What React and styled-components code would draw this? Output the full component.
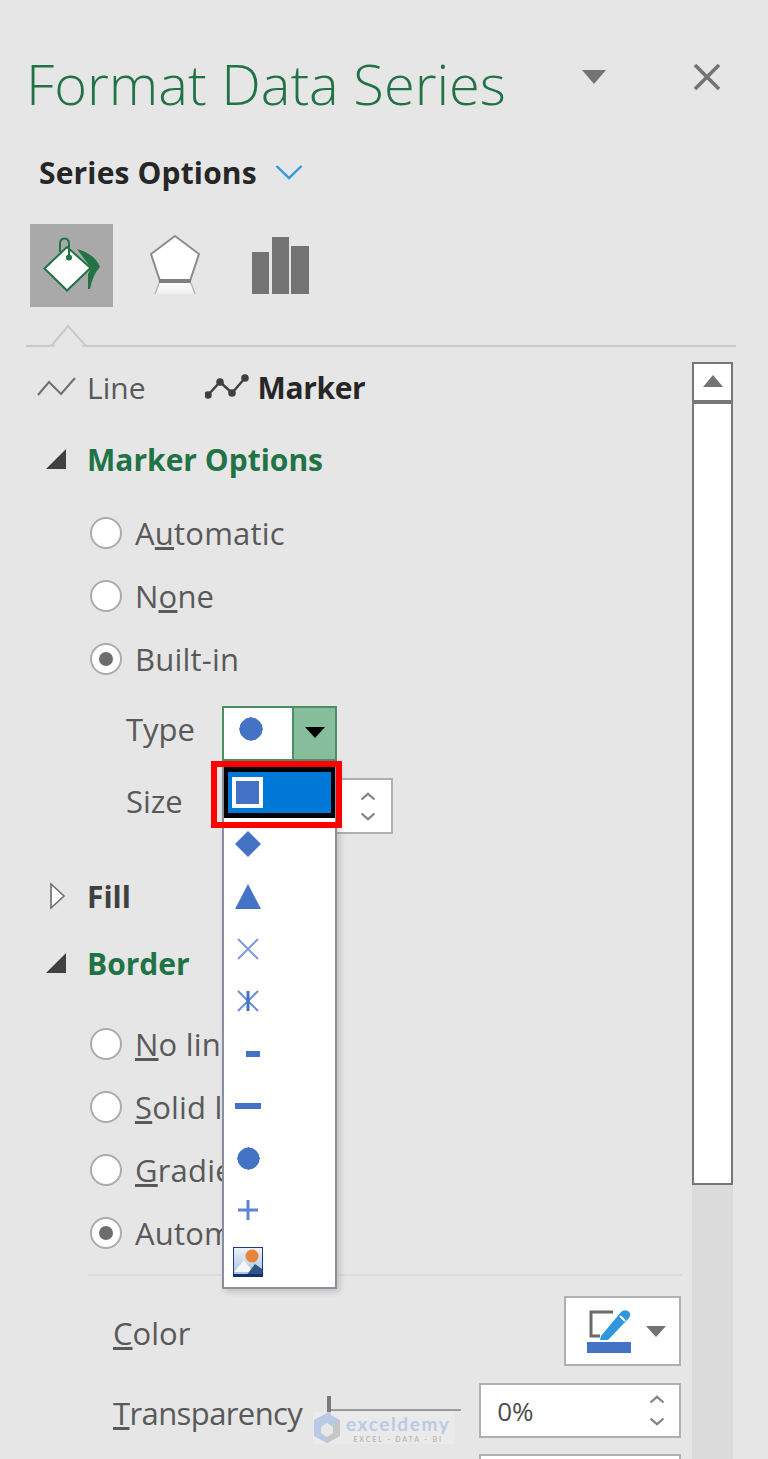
import React from "react";
import styled, { createGlobalStyle } from "styled-components";

const Global = createGlobalStyle`
  html, body { margin: 0; padding: 0; background: #e6e6e6; }
  body { font-family: "Open Sans", "Noto Sans", sans-serif; }
`;
const Page = styled.div`
  position: relative; width: 768px; height: 1459px; overflow: hidden; background: #e6e6e6;
`;
const Header = styled.header`
  display: flex; align-items: center; height: 60px; margin-top: 53px; padding-left: 26px;
`;
const Title = styled.h1`
  margin: 0; flex: 1; font-size: 56px; font-weight: 300; color: #217346; line-height: 60px; letter-spacing: 0; white-space: nowrap;
`;
const HeaderIcons = styled.div`
  display: flex; align-items: center; gap: 87px; margin-right: 47px; margin-top: -12px;
`;
const SeriesRow = styled.div`
  display: flex; align-items: center; gap: 18px; height: 40px; margin-top: 39px; padding-left: 39px;
  font-size: 30px; font-weight: 700; color: #262626; letter-spacing: 0.15px;
`;
const Tabs = styled.div`
  display: flex; align-items: center; height: 83px; margin-top: 32px; padding-left: 30px;
`;
const TabBtn = styled.div`
  width: 83px; height: 83px; display: flex; align-items: center; justify-content: center;
  margin-right: ${p => p.$gap || 0}px; background: ${p => (p.$active ? "#a9a9a9" : "transparent")};
`;
const Rule = styled.div`
  position: relative; height: 2px; margin: 38px 32px 0 26px; background: #c9c9c9;
`;
const Notch = styled.svg`
  position: absolute; left: 24px; top: -22px;
`;
const Body = styled.div`
  display: flex; height: 1120px;
`;
const Content = styled.div`
  width: 692px; flex: none; padding-top: 20px;
`;
const ModeRow = styled.div`
  display: flex; align-items: center; height: 40px; padding-left: 37px;
`;
const Mode = styled.div`
  display: flex; align-items: center; gap: ${p => p.$gap}px; margin-right: ${p => p.$mr || 0}px;
  font-size: 30px; letter-spacing: ${p => (p.$bold ? -0.35 : 0)}px;
  font-weight: ${p => (p.$bold ? 700 : 400)}; color: ${p => (p.$bold ? "#262626" : "#595959")};
`;
const Section = styled.div`
  display: flex; align-items: center; height: 40px; margin-top: ${p => p.$mt}px;
  font-size: 30px; font-weight: 700; letter-spacing: 0; color: ${p => (p.$open ? "#217346" : "#404040")};
`;
const Arrow = styled.svg`
  width: 20px; height: ${p => p.$h || 20}px; margin-left: 46px; margin-right: 21px; flex: none;
`;
const RadioRow = styled.label`
  display: flex; align-items: center; gap: 13px; height: 32px; margin-top: ${p => p.$mt}px; padding-left: 90px;
  font-size: 31px; color: #595959; letter-spacing: 0.2px; white-space: nowrap;
`;
const Radio = styled.span`
  width: 32px; height: 32px; box-sizing: border-box; border-radius: 50%; flex: none;
  border: 2px solid #ababab; background: #fff; display: flex; align-items: center; justify-content: center;
  &::after { content: ""; display: ${p => (p.$on ? "block" : "none")}; width: 14px; height: 14px; border-radius: 50%; background: #6d6d6d; }
`;
const FieldRow = styled.div`
  display: flex; align-items: center; margin-top: ${p => p.$mt}px; padding-left: 126px;
  font-size: 31px; color: #595959; letter-spacing: 0;
`;
const FieldLabel = styled.span`
  width: 96px; flex: none; margin-bottom: 10px;
`;
const TypeBox = styled.div`
  display: flex; width: 115px; height: 55px; box-sizing: border-box; border: 2px solid #4c8f67; background: #fff;
`;
const TypeValue = styled.div`
  flex: 1; display: flex; padding: 9px 0 0 15px;
`;
const TypeCaret = styled.div`
  width: 43px; display: flex; align-items: center; justify-content: center; padding-bottom: 2px; box-sizing: border-box; background: #86bd9b; border-left: 2px solid #4c8f67;
`;
const SizeBox = styled.div`
  display: flex; justify-content: flex-end; width: 171px; height: 56px; box-sizing: border-box;
  border: 2px solid #b0b0b0; background: #fff;
`;
const Spin = styled.div`
  width: 46px; display: flex; flex-direction: column; justify-content: space-around; align-items: center; padding: 6px 0; box-sizing: border-box;
`;
const Divider = styled.div`
  height: 2px; margin: 25px 10px 0 88px; background: #dcdcdc;
`;
const SettingRow = styled.div`
  display: flex; align-items: center; justify-content: space-between; height: ${p => p.$h}px;
  margin: ${p => p.$mt}px 11px 0 113px; font-size: 31px; color: #595959; letter-spacing: 0;
`;
const SettingLabel = styled.span`
  margin-top: 4px; letter-spacing: ${p => p.$ls || 0}px; white-space: nowrap;
`;
const ColorBtn = styled.div`
  display: flex; align-items: center; gap: 15px; width: 117px; height: 70px; padding-left: 21px; box-sizing: border-box;
  border: 2px solid #b0b0b0; background: #fff;
`;
const SliderWrap = styled.div`
  position: relative; display: flex; align-items: center; flex: none; width: 134px; height: 40px; margin-left: 25px; margin-right: 18px;
`;
const SliderLine = styled.div`
  width: 100%; height: 2px; background: #9a9a9a; margin-top: -2px;
`;
const SliderThumb = styled.div`
  position: absolute; left: 0; top: 5px; width: 4px; height: 28px; background: #7a7a7a;
`;
const PctBox = styled.div`
  display: flex; align-items: center; justify-content: space-between; width: 202px; height: 55px; box-sizing: border-box;
  padding: 0 14px 0 16px; border: 2px solid #b0b0b0; background: #fff; font-size: 26px; color: #4d4d4d; letter-spacing: 0;
`;
const SpinCol = styled.div`
  display: flex; flex-direction: column; gap: 13px; align-items: center;
`;
const LeftGroup = styled.div`
  display: flex; align-items: center;
`;
const NextBox = styled.div`
  width: 202px; height: 30px; box-sizing: border-box; margin: 16px 11px 0 auto; border: 2px solid #b0b0b0; border-bottom: 0; background: #fff;
`;
const Scrollbar = styled.div`
  width: 41px; flex: none; margin-top: 15px; display: flex; flex-direction: column;
  background: #dbdbdb;
`;
const ScrollUp = styled.div`
  height: 38px; box-sizing: border-box; background: #fff; border: 2px solid #777; border-bottom: 0;
  display: flex; justify-content: center; padding-top: 11px;
`;
const ScrollThumb = styled.div`
  height: 785px; box-sizing: border-box; background: #fff; border: 2px solid #777; border-top-width: 4px;
`;
const Menu = styled.div`
  position: absolute; left: 222px; top: 762px; width: 115px; height: 527px; box-sizing: border-box;
  background: #fff; border: 2px solid #8a8f99; border-top: 0; box-shadow: 3px 3px 6px rgba(0,0,0,.16);
`;
const MenuSelected = styled.div`
  position: absolute; left: 0; top: 5px; width: 111px; height: 51px; box-sizing: border-box;
  background: #0078d7; border: 4px solid #000; border-width: 5px 4px; display: flex; align-items: center; padding-left: 4px;
`;
const SwatchFrame = styled.div`
  width: 31px; height: 31px; box-sizing: border-box; background: #fff; display: flex; align-items: center; justify-content: center;
`;
const Swatch = styled.div`
  width: 23px; height: 23px; background: #4472c4;
`;
const RedOutline = styled.div`
  position: absolute; left: 211px; top: 761px; width: 131px; height: 67px; box-sizing: border-box; border: 6px solid #ff0000;
`;
const MenuItem = styled.div`
  position: absolute; left: 9px; top: ${p => p.$y}px; width: 30px; height: 30px;
  display: flex; align-items: center; justify-content: center;
`;
const Watermark = styled.div`
  position: absolute; left: 313px; top: 1412px; width: 142px; height: 32px; display: flex; align-items: center; gap: 5px;
  background: rgba(235,235,235,.72);
`;
const WmText = styled.div`
  display: flex; flex-direction: column; align-items: center; font-family: Lato, "Open Sans", sans-serif;
`;
const WmName = styled.span`
  font-size: 19px; font-weight: 700; color: #b9c9e6; letter-spacing: 1.6px; line-height: 23px; height: 23px;
`;
const WmSub = styled.span`
  font-size: 7px; font-weight: 700; color: #b8b8b8; letter-spacing: 1.9px; line-height: 9px; height: 9px;
`;

const blue = "#4472c4";
const Chev = ({ up, c = "#858585" }) => (
  <svg width="16" height="9" viewBox="0 0 16 9" fill="none" stroke={c} strokeWidth="2.2">
    <path d={up ? "M1.5 7.5 L8 1.8 L14.5 7.5" : "M1.5 1.5 L8 7.2 L14.5 1.5"} />
  </svg>
);
const Blob = ({ s = 24 }) => (
  <svg width={s} height={s} viewBox="0 0 24 24" fill={blue}>
    <path d="M8 1h1.5l2.5-1 2.5 1H16l3 2 2 2 2 3v1.5l1 2.5-1 2.5V16l-2 3-2 2-3 2h-1.5L12 24l-2.5-1H8l-3-2-2-2-2-3v-1.5L0 12l1-2.5V8l2-3 2-2z" />
  </svg>
);
const Lab = ({ k, pre = "", post = "" }) => <span>{pre}<u>{k}</u>{post}</span>;

export default function App() {
  return (
    <Page>
      <Global />
      <Header>
        <Title>Format Data Series</Title>
        <HeaderIcons>
          <svg width="24" height="14" viewBox="0 0 24 14"><path d="M0 0h24L12 14z" fill="#737373" /></svg>
          <svg width="28" height="26" viewBox="0 0 28 26" stroke="#737373" strokeWidth="3.6" fill="none"><path d="M2 1L26 25M26 1L2 25" /></svg>
        </HeaderIcons>
      </Header>
      <SeriesRow>
        <span>Series Options</span>
        <svg width="28" height="16" viewBox="0 0 28 16" fill="none" stroke="#2e97e0" strokeWidth="2.4"><path d="M1.5 2 L14 14 L26.5 2" /></svg>
      </SeriesRow>
      <Tabs>
        <TabBtn $active $gap={20}>
          <svg width="60" height="60" viewBox="0 0 60 60">
            <path d="M25 11 L2.5 32.5 L25 54.5 L48.5 32 Z" fill="#fff" stroke="#217346" strokeWidth="2" />
            <path d="M18 16 V8 Q18 2.5 22.5 2.5 Q27 2.5 27 8 V20" fill="none" stroke="#217346" strokeWidth="2" />
            <circle cx="27" cy="21.5" r="3" fill="#217346" />
            <path d="M35 13 Q53 18 58 31 Q51 38 48 53 L46 53 L46 38 L49 32 Z" fill="#217346" />
          </svg>
        </TabBtn>
        <TabBtn $gap={23}>
          <svg width="54" height="64" viewBox="0 0 54 64">
            <defs><linearGradient id="fade" x1="0" y1="0" x2="0" y2="1"><stop offset="0" stopColor="#fff" /><stop offset="1" stopColor="#eee" /></linearGradient></defs>
            <path d="M27 2 L51 20 L42 47 H12 L3 20 Z" fill="#fff" stroke="#8c8c8c" strokeWidth="2" />
            <rect x="11" y="45" width="32" height="4" fill="#7f7f7f" />
            <path d="M10 49 H44 L48 60 H6 Z" fill="url(#fade)" />
            <path d="M11 49 L7 60 M43 49 L47 60" stroke="#b5b5b5" strokeWidth="1.5" />
          </svg>
        </TabBtn>
        <TabBtn>
          <svg width="58" height="58" viewBox="0 0 58 58" fill="#737373">
            <rect x="0" y="15" width="17" height="42" />
            <rect x="20" y="0" width="17" height="57" />
            <rect x="39" y="9" width="18" height="48" />
          </svg>
        </TabBtn>
      </Tabs>
      <Rule>
        <Notch width="40" height="24" viewBox="0 0 40 24" fill="none">
          <path d="M0 22 H2 L18 3 L36 23" stroke="#c9c9c9" strokeWidth="2" />
          <path d="M4 24 L18 7 L33 24 Z" fill="#e6e6e6" />
        </Notch>
      </Rule>
      <Body>
        <Content>
          <ModeRow>
            <Mode $gap={11} $mr={60}>
              <svg width="39" height="22" viewBox="0 0 39 22" fill="none" stroke="#707070" strokeWidth="2"><path d="M1 19 L12 6 L24 18 L38 2" /></svg>
              Line
            </Mode>
            <Mode $gap={8} $bold>
              <svg width="44" height="26" viewBox="0 0 44 26" fill="#404040" stroke="#404040" strokeWidth="2.4">
                <path d="M3 21 L15 8 L27 19 L40 4" fill="none" />
                <circle cx="3" cy="21" r="2.6" /><circle cx="15" cy="8" r="2.6" /><circle cx="27" cy="19" r="2.6" /><circle cx="40" cy="4" r="2.6" />
              </svg>
              Marker
            </Mode>
          </ModeRow>
          <Section $mt={32} $open>
            <Arrow viewBox="0 0 20 20"><path d="M20 0V20H0Z" fill="#404040" /></Arrow>
            Marker Options
          </Section>
          <RadioRow $mt={38}><Radio /><Lab pre="A" k="u" post="tomatic" /></RadioRow>
          <RadioRow $mt={31}><Radio /><Lab pre="N" k="o" post="ne" /></RadioRow>
          <RadioRow $mt={31}><Radio $on /><span>Built-in</span></RadioRow>
          <FieldRow $mt={31}>
            <FieldLabel>Type</FieldLabel>
            <TypeBox>
              <TypeValue><Blob s={24} /></TypeValue>
              <TypeCaret><svg width="20" height="11" viewBox="0 0 20 11"><path d="M0 0h20L10 11z" fill="#000" /></svg></TypeCaret>
            </TypeBox>
          </FieldRow>
          <FieldRow $mt={17}>
            <FieldLabel>Size</FieldLabel>
            <SizeBox><Spin><Chev up /><Chev /></Spin></SizeBox>
          </FieldRow>
          <Section $mt={42}>
            <Arrow $h={28} viewBox="0 0 20 28"><path d="M5 2L18 14L5 26Z" fill="#fff" stroke="#6d6d6d" strokeWidth="1.6" /></Arrow>
            Fill
          </Section>
          <Section $mt={27} $open>
            <Arrow viewBox="0 0 20 20"><path d="M20 0V20H0Z" fill="#404040" /></Arrow>
            Border
          </Section>
          <RadioRow $mt={45}><Radio /><Lab k="N" post="o line" /></RadioRow>
          <RadioRow $mt={31}><Radio /><Lab k="S" post="olid line" /></RadioRow>
          <RadioRow $mt={31}><Radio /><Lab k="G" post="radient line" /></RadioRow>
          <RadioRow $mt={31}><Radio $on /><span>Automatic</span></RadioRow>
          <Divider />
          <SettingRow $h={70} $mt={20}>
            <SettingLabel><u>C</u>olor</SettingLabel>
            <ColorBtn>
              <svg width="44" height="44" viewBox="0 0 44 44">
                <path d="M26 3 H4 V27 H13" fill="none" stroke="#6a6a6a" strokeWidth="3" />
                <path d="M14 27 L34 3 Q37 0 41 2 Q45 5 42 9 L21 31 L13 31 Z" fill="#2e97e0" />
                <path d="M33 7 L38 12" stroke="#fff" strokeWidth="2" />
                <rect x="0" y="33" width="44" height="11" fill="#4472c4" />
              </svg>
              <svg width="20" height="11" viewBox="0 0 20 11"><path d="M0 0h20L10 11z" fill="#737373" /></svg>
            </ColorBtn>
          </SettingRow>
          <SettingRow $h={55} $mt={17}>
            <LeftGroup>
              <SettingLabel $ls={-0.6}><u>T</u>ransparency</SettingLabel>
              <SliderWrap><SliderLine /><SliderThumb /></SliderWrap>
            </LeftGroup>
            <PctBox>
              0%
              <SpinCol><Chev up /><Chev /></SpinCol>
            </PctBox>
          </SettingRow>
          <NextBox />
        </Content>
        <Scrollbar>
          <ScrollUp><svg width="20" height="12" viewBox="0 0 20 12"><path d="M10 0L20 12H0z" fill="#737373" /></svg></ScrollUp>
          <ScrollThumb />
        </Scrollbar>
      </Body>
      <Menu>
        <MenuItem $y={67}><svg width="26" height="26" viewBox="0 0 26 26"><path d="M13 0L26 13L13 26L0 13Z" fill={blue} /></svg></MenuItem>
        <MenuItem $y={120}><svg width="26" height="26" viewBox="0 0 26 26"><path d="M13 0L26 25H0Z" fill={blue} /></svg></MenuItem>
        <MenuItem $y={172}><svg width="22" height="22" viewBox="0 0 22 22" stroke="#7f9fdc" strokeWidth="2.2"><path d="M1 1L21 21M21 1L1 21" /></svg></MenuItem>
        <MenuItem $y={224}><svg width="22" height="22" viewBox="0 0 22 22" stroke="#6f92d6" strokeWidth="2.2"><path d="M1 1L21 21M21 1L1 21" /><path d="M11 1V21" stroke={blue} strokeWidth="3" /></svg></MenuItem>
        <MenuItem $y={277}><svg width="14" height="6" viewBox="0 0 14 6" style={{ marginLeft: 10 }}><rect width="14" height="6" fill={blue} /></svg></MenuItem>
        <MenuItem $y={329}><svg width="26" height="6" viewBox="0 0 26 6"><rect width="26" height="6" fill={blue} /></svg></MenuItem>
        <MenuItem $y={381}><Blob s={23} /></MenuItem>
        <MenuItem $y={433}><svg width="20" height="20" viewBox="0 0 20 20" stroke="#5e86d0" strokeWidth="3"><path d="M10 0V20M0 10H20" /></svg></MenuItem>
        <MenuItem $y={485}>
          <svg width="30" height="30" viewBox="0 0 30 30">
            <defs><linearGradient id="sky" x1="0" y1="0" x2="0" y2="1"><stop offset="0" stopColor="#eef1f6" /><stop offset="1" stopColor="#a9c4e4" /></linearGradient></defs>
            <rect width="30" height="30" fill="#1c3f7a" />
            <rect x="1" y="1" width="28" height="26" fill="url(#sky)" />
            <circle cx="19" cy="9" r="6.5" fill="#e8833a" />
            <path d="M1 25 L11 13 L20 25 Z" fill="#f4f6fa" />
            <path d="M13 29 L22 17 L29 22 V29 Z" fill="#2f5488" />
            <path d="M0 27 H30 V30 H0Z" fill="#123469" />
          </svg>
        </MenuItem>
        <MenuSelected><SwatchFrame><Swatch /></SwatchFrame></MenuSelected>
      </Menu>
      <RedOutline />
      <Watermark>
        <svg width="28" height="32" viewBox="0 0 28 32">
          <path d="M14 1L27 8V24L14 31L1 24V8Z" fill="#b9c9e6" />
          <path d="M14 16L27 8V24L14 31Z" fill="#c6c6c6" />
          <path d="M14 11L20 15V21L14 25L8 21V15Z" fill="#e8e8e8" />
        </svg>
        <WmText>
          <WmName>exceldemy</WmName>
          <WmSub>EXCEL - DATA - BI</WmSub>
        </WmText>
      </Watermark>
    </Page>
  );
}
